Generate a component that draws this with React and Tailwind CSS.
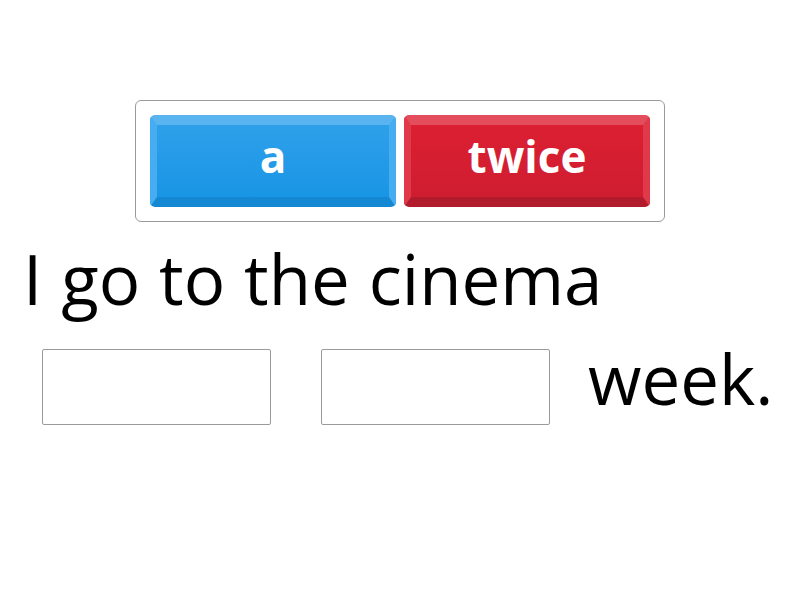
import React from "react";

const Tile = ({ label, face, top, bottom, side }) => (
  <div
    className={`flex-1 h-[92px] rounded-[5px] ${side} ${top} ${bottom} border-t-[10px] border-b-[10px] border-x-[7px] flex items-center justify-center`}
  >
    <div className={`w-full h-full ${face} flex items-center justify-center`}>
      <span className="text-white font-bold text-[44px] leading-none pb-[10px]">{label}</span>
    </div>
  </div>
);

const Blank = () => (
  <div className="w-[229px] h-[76px] border border-[#9a9a9a] rounded-[2px] bg-white shrink-0" />
);

export default function App() {
  return (
    <div
      className="w-[800px] h-[600px] bg-white text-black overflow-hidden"
      style={{ fontFamily: '"Open Sans", sans-serif' }}
    >
      <div className="pt-[100px] flex justify-center">
        <div className="w-[530px] h-[122px] border border-[#9a9a9a] rounded-[6px] px-[14px] py-[14px] flex gap-[8px]">
          <Tile
            label="a"
            face="bg-gradient-to-b from-[#2ea0ea] to-[#1895e5]"
            side="border-x-[#46aef0]"
            top="border-t-[#5ab4f0]"
            bottom="border-b-[#1488d2]"
          />
          <Tile
            label="twice"
            face="bg-gradient-to-b from-[#dc1f32] to-[#cf1d30]"
            side="border-x-[#e0394a]"
            top="border-t-[#e34d5c]"
            bottom="border-b-[#b11b2b]"
          />
        </div>
      </div>
      <div className="pl-[23px] mt-[22px] text-[69px] leading-[69px] [word-spacing:1px]">
        I go to the cinema
      </div>
      <div className="flex items-start pl-[42px] mt-[36px]">
        <Blank />
        <div className="w-[50px]" />
        <Blank />
        <span className="ml-[38px] -mt-[5px] text-[69px] leading-[69px]">week.</span>
      </div>
    </div>
  );
}
